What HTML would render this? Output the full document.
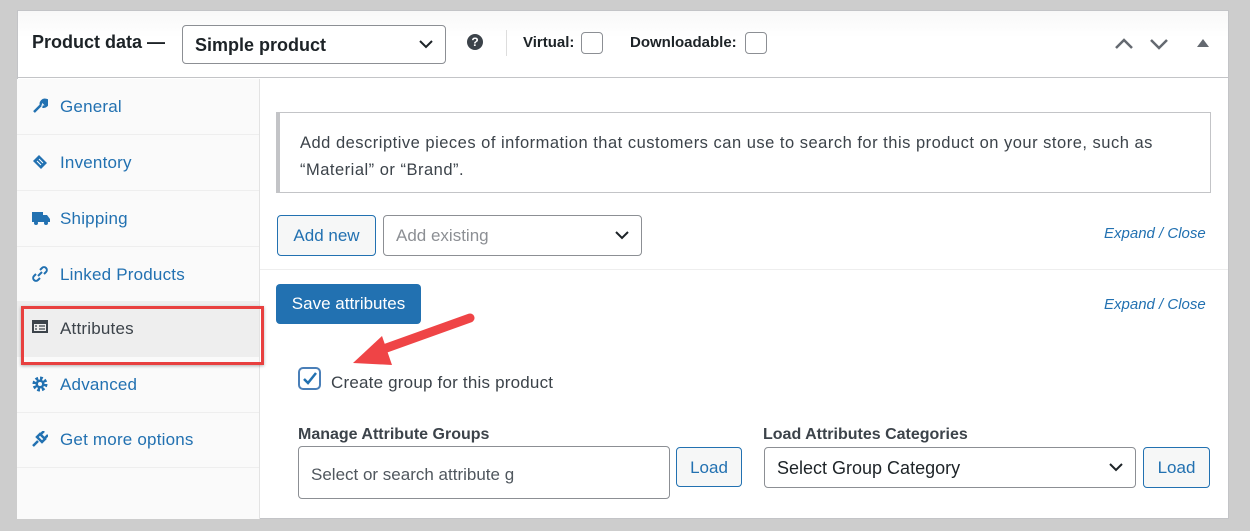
<!DOCTYPE html>
<html><head><meta charset="utf-8"><style>
*{box-sizing:border-box;margin:0;padding:0}
body{width:1250px;height:531px;background:#cdcdcd;font-family:"Liberation Sans",sans-serif;position:relative;overflow:hidden;color:#3c434a}
.a{position:absolute}
#panel{left:17px;top:10px;width:1212px;height:509px;background:#fff;border:1px solid #c3c4c7}
.side{left:17px;top:79px;width:243px;height:440px;background:#fafafa;border-right:1px solid #e3e3e3}
.item{position:absolute;left:0;width:242px;height:56px;border-bottom:1px solid #eee;font-size:17px;color:#2271b1;padding-left:43px;line-height:56px;letter-spacing:0.2px}
.item svg{position:absolute;left:15px;top:19px}
.btn{border:1px solid #2271b1;border-radius:4px;color:#2271b1;background:#f6f7f7;font-size:17px;text-align:center}
.sel{border:1px solid #8c8f94;border-radius:4px;background:#fff;font-size:17px}
.exp{font-style:italic;color:#2271b1;font-size:15px}
.cb{border:1px solid #8c8f94;border-radius:4px;background:#fff}
</style></head><body>
<div id="panel" class="a"></div>
<div class="a" style="left:18px;top:11px;width:1210px;height:67px;border-bottom:1px solid #c3c4c7;background:linear-gradient(#f8f8f8,#fff 40%)"></div>
<div class="a" style="left:32px;top:32px;font-size:18px;font-weight:bold;color:#1d2327">Product data —</div>
<div class="a sel" style="left:182px;top:25px;width:264px;height:39px;padding:9px 0 0 12px;font-size:18px;font-weight:bold;color:#1d2327">Simple product</div>
<svg class="a" style="left:418px;top:38px" width="16" height="12"><path d="M2 3l6 6 6-6" stroke="#1d2327" stroke-width="2" fill="none"/></svg>
<div class="a" style="left:467px;top:34px;width:16px;height:16px;border-radius:50%;background:#3c434a;color:#fff;font-size:12px;font-weight:bold;text-align:center;line-height:16px">?</div>
<div class="a" style="left:506px;top:30px;height:26px;border-left:1px solid #ddd"></div>
<div class="a" style="left:523px;top:34px;font-size:15px;font-weight:bold;color:#1d2327">Virtual:</div>
<div class="a cb" style="left:581px;top:32px;width:22px;height:22px"></div>
<div class="a" style="left:630px;top:34px;font-size:15px;font-weight:bold;color:#1d2327">Downloadable:</div>
<div class="a cb" style="left:745px;top:32px;width:22px;height:22px"></div>
<svg class="a" style="left:1113px;top:36px" width="60" height="16"><path d="M3 12l8-8 8 8M38 4l8 8 8-8" stroke="#646970" stroke-width="2.5" fill="none"/></svg>
<svg class="a" style="left:1196px;top:38px" width="14" height="10"><path d="M1 9l6-8 6 8z" fill="#646970"/></svg>

<div class="a side"></div>
<div class="a" style="left:17px;top:79px">
<div class="item" style="top:0"><svg width="16" height="16" viewBox="0 0 16 16"><path d="M2 14l7-7M9 7a4 4 0 0 1 5-5l-2.5 2.5 1.5 1.5 2.5-2.5a4 4 0 0 1-5 5" stroke="#2271b1" stroke-width="2.5" fill="none"/></svg>General</div>
<div class="item" style="top:56px"><svg width="16" height="16"><path d="M1 7l6-6 8 8-6 6z" fill="#2271b1"/><path d="M5 7l4 4M7 5l4 4" stroke="#fff"/></svg>Inventory</div>
<div class="item" style="top:112px"><svg width="18" height="16"><rect x="0" y="2" width="11" height="10" fill="#2271b1"/><path d="M11 5h4l3 4v3h-7z" fill="#2271b1"/><circle cx="4" cy="13" r="2" fill="#2271b1"/><circle cx="14" cy="13" r="2" fill="#2271b1"/></svg>Shipping</div>
<div class="item" style="top:168px"><svg width="16" height="16"><path d="M6 10l4-4M4 8L2 10a2.5 2.5 0 0 0 4 4l2-2M12 8l2-2a2.5 2.5 0 0 0-4-4L8 4" stroke="#2271b1" stroke-width="2" fill="none"/></svg>Linked Products</div>
<div class="item" style="top:222px;height:56px;background:#eee;color:#3c434a"><svg width="16" height="14"><rect x="0" y="0" width="16" height="13" fill="#3c434a"/><rect x="2" y="4" width="12" height="7" fill="#eee"/><path d="M3 6h2M7 6h6M3 9h2M7 9h6" stroke="#3c434a" stroke-width="1.2"/></svg>Attributes</div>
<div class="item" style="top:278px"><svg width="16" height="16"><circle cx="8" cy="8" r="5.5" stroke="#2271b1" stroke-width="4" stroke-dasharray="2.5 1.8" fill="none"/><circle cx="8" cy="8" r="4.5" fill="#2271b1"/><circle cx="8" cy="8" r="2" fill="#fafafa"/></svg>Advanced</div>
<div class="item" style="top:333px"><svg width="16" height="16"><path d="M1 15l5-5M5 6l5 5 3-3-5-5zM9 3l3-3M13 7l3-3" stroke="#2271b1" stroke-width="2.5" fill="none"/></svg>Get more options</div>
</div>
<div class="a" style="left:21px;top:306px;width:243px;height:59px;border:3px solid #e8403f;box-shadow:0 1px 3px rgba(0,0,0,.3)"></div>

<div class="a" style="left:276px;top:112px;width:935px;height:81px;border:1px solid #c3c4c7;border-left:4px solid #c3c4c7;padding:17px 0 0 20px;font-size:16.5px;line-height:27px;color:#3c434a;letter-spacing:0.5px">Add descriptive pieces of information that customers can use to search for this product on your store, such as “Material” or “Brand”.</div>
<div class="a btn" style="left:277px;top:215px;width:99px;height:41px;line-height:40px">Add new</div>
<div class="a sel" style="left:383px;top:215px;width:259px;height:41px;padding:10px 0 0 12px;color:#8c8f94">Add existing</div>
<svg class="a" style="left:614px;top:229px" width="16" height="12"><path d="M2 3l6 6 6-6" stroke="#1d2327" stroke-width="2" fill="none"/></svg>
<div class="a exp" style="left:1104px;top:225px">Expand / Close</div>
<div class="a" style="left:260px;top:269px;width:968px;border-top:1px solid #eee"></div>
<div class="a" style="left:276px;top:284px;width:145px;height:40px;background:#2271b1;border-radius:4px;color:#fff;font-size:17px;line-height:40px;text-align:center">Save attributes</div>
<div class="a exp" style="left:1104px;top:296px">Expand / Close</div>
<svg class="a" style="left:340px;top:305px" width="150" height="70"><path d="M130 13L38 46" stroke="#ef4446" stroke-width="9" stroke-linecap="round" fill="none"/><path d="M13 58L42 31 52 60z" fill="#ef4446"/></svg>
<div class="a" style="left:298px;top:367px;width:23px;height:23px;border:2px solid #4a7fb8;border-radius:5px;background:#fff"></div>
<svg class="a" style="left:301px;top:370px" width="18" height="18"><path d="M3 9l4 4 8-10" stroke="#2271b1" stroke-width="2.5" fill="none"/></svg>
<div class="a" style="left:331px;top:373px;font-size:17px;letter-spacing:0.2px">Create group for this product</div>
<div class="a" style="left:298px;top:426px;font-size:16px;font-weight:bold">Manage Attribute Groups</div>
<div class="a sel" style="left:298px;top:446px;width:372px;height:53px;padding:18px 0 0 12px;color:#50575e;font-size:17px;white-space:nowrap;overflow:hidden">Select or search attribute g</div>
<div class="a btn" style="left:676px;top:447px;width:66px;height:40px;line-height:39px">Load</div>
<div class="a" style="left:763px;top:426px;font-size:16px;font-weight:bold">Load Attributes Categories</div>
<div class="a sel" style="left:764px;top:447px;width:372px;height:41px;padding:10px 0 0 12px;color:#1d2327;font-size:18px">Select Group Category</div>
<svg class="a" style="left:1108px;top:461px" width="16" height="12"><path d="M2 3l6 6 6-6" stroke="#1d2327" stroke-width="2" fill="none"/></svg>
<div class="a btn" style="left:1143px;top:447px;width:67px;height:41px;line-height:40px">Load</div>
</body></html>
